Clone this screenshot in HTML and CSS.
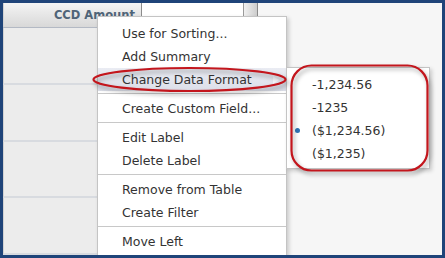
FILE: index.html
```html
<!DOCTYPE html>
<html lang="en">
<head>
  <meta charset="UTF-8" />
  <title>Column Menu - Change Data Format</title>
  <link rel="stylesheet" href="styles.css">
</head>
<body>
  <div class="frame">
    <!-- table (header + rows) -->
    <div class="table">
      <div class="thead">
        <div class="th-label">CCD Amount</div>
        <div class="th-blank"></div>
      </div>
      <div class="row"></div>
      <div class="row"></div>
      <div class="row"></div>
      <div class="row"></div>
    </div>
    <div class="splitter"></div>
    <div class="pane"></div>

    <!-- context menu -->
    <ul class="menu">
      <li class="item">Use for Sorting...</li>
      <li class="item">Add Summary</li>
      <li class="item active">Change Data Format<span class="arrow"></span></li>
      <li class="sep"></li>
      <li class="item">Create Custom Field...</li>
      <li class="sep"></li>
      <li class="item">Edit Label</li>
      <li class="item">Delete Label</li>
      <li class="sep"></li>
      <li class="item">Remove from Table</li>
      <li class="item">Create Filter</li>
      <li class="sep"></li>
      <li class="item">Move Left</li>
    </ul>

    <!-- sub menu -->
    <ul class="submenu">
      <li class="sub-item"><span class="mark"></span>-1,234.56</li>
      <li class="sub-item"><span class="mark"></span>-1235</li>
      <li class="sub-item"><span class="mark"><span class="dot"></span></span>($1,234.56)</li>
      <li class="sub-item"><span class="mark"></span>($1,235)</li>
    </ul>

    <!-- red callouts drawn over the screenshot -->
    <svg class="callouts" width="445" height="258" viewBox="0 0 445 258">
      <ellipse cx="189.5" cy="79.5" rx="96" ry="11.5" />
      <rect x="291.5" y="65.5" width="136" height="105" rx="20" ry="20" />
    </svg>
  </div>
</body>
</html>
```

FILE: styles.css
```css
/* -----------------------------------------------
   1. Reset
   ----------------------------------------------- */
* {
  margin: 0;
  padding: 0;
  box-sizing: border-box;
}

body {
  font-family: "DejaVu Sans", Verdana, sans-serif;
  background: #ffffff;
}

/* -----------------------------------------------
   2. Outer frame (blue border)
   ----------------------------------------------- */
.frame {
  width: 445px;
  height: 258px;
  border: 3px solid #1f4479;
  position: relative;
  overflow: hidden;
  display: flex;
  background: #f6f6f6;
}

/* -----------------------------------------------
   3. Table
   ----------------------------------------------- */
.table {
  width: 240px;
  display: flex;
  flex-direction: column;
}

.thead {
  display: flex;
  height: 26px;
  border-bottom: 1px solid #b3b9c4;
}

.th-label {
  width: 139px;
  background: linear-gradient(#f4f4f4, #d8d8d8);
  border-right: 1px solid #8c8c8c;
  border-left: 1px solid #d2d2d2;
  text-align: right;
  padding-right: 6px;
  font-size: 11.5px;
  font-weight: bold;
  line-height: 24px;
  color: #4f6478;
}

.th-blank {
  flex: 1;
  background: #ffffff;
}

.row {
  height: 67px;
  background: #ececec;
  border-left: 1px solid #d2d2d2;
  border-bottom: 2px solid #d8dbe0;
}

.splitter {
  width: 15px;
  background: linear-gradient(to right, #f0f0f0, #cdcdcd);
  border-left: 1px solid #9a9a9a;
  border-right: 1px solid #8a8a8a;
}

.pane {
  flex: 1;
  background: #f6f6f6;
}

/* -----------------------------------------------
   4. Context menu
   ----------------------------------------------- */
.menu,
.submenu {
  list-style: none;
  position: absolute;
  background: #ffffff;
  border: 1px solid #c4c4c4;
  box-shadow: 2px 2px 4px rgba(0, 0, 0, 0.18);
  font-size: 12.5px;
  color: #333333;
}

.menu {
  left: 94px;
  top: 13px;
  width: 190px;
  height: 260px;
  padding-top: 5px;
}

.item {
  height: 23px;
  line-height: 23px;
  padding-left: 24px;
  display: flex;
  align-items: center;
  white-space: nowrap;
}

.item.active {
  background: linear-gradient(#eaecf3, #dcdfe9);
}

.arrow {
  margin-left: auto;
  margin-right: 7px;
  width: 0;
  height: 0;
  border-top: 4px solid transparent;
  border-bottom: 4px solid transparent;
  border-left: 6px solid #f3f4f8;
}

.sep {
  height: 1px;
  background: #c8c8c8;
  margin: 2px 0 3px;
}

/* -----------------------------------------------
   5. Sub menu (number formats)
   ----------------------------------------------- */
.submenu {
  left: 283px;
  top: 64px;
  width: 144px;
  padding: 5px 0 3px 8px;
}

.sub-item {
  height: 23px;
  line-height: 23px;
  display: flex;
  align-items: center;
}

.mark {
  width: 17px;
  display: flex;
  align-items: center;
}

.dot {
  width: 5px;
  height: 5px;
  border-radius: 50%;
  background: #2e74b5;
}

/* -----------------------------------------------
   6. Red callouts
   ----------------------------------------------- */
.callouts {
  position: absolute;
  left: -3px;
  top: -3px;
  pointer-events: none;
  filter: drop-shadow(2px 3px 2px rgba(0, 0, 0, 0.35));
}

.callouts ellipse,
.callouts rect {
  fill: none;
  stroke: #c3161d;
  stroke-width: 2.2;
}
```
